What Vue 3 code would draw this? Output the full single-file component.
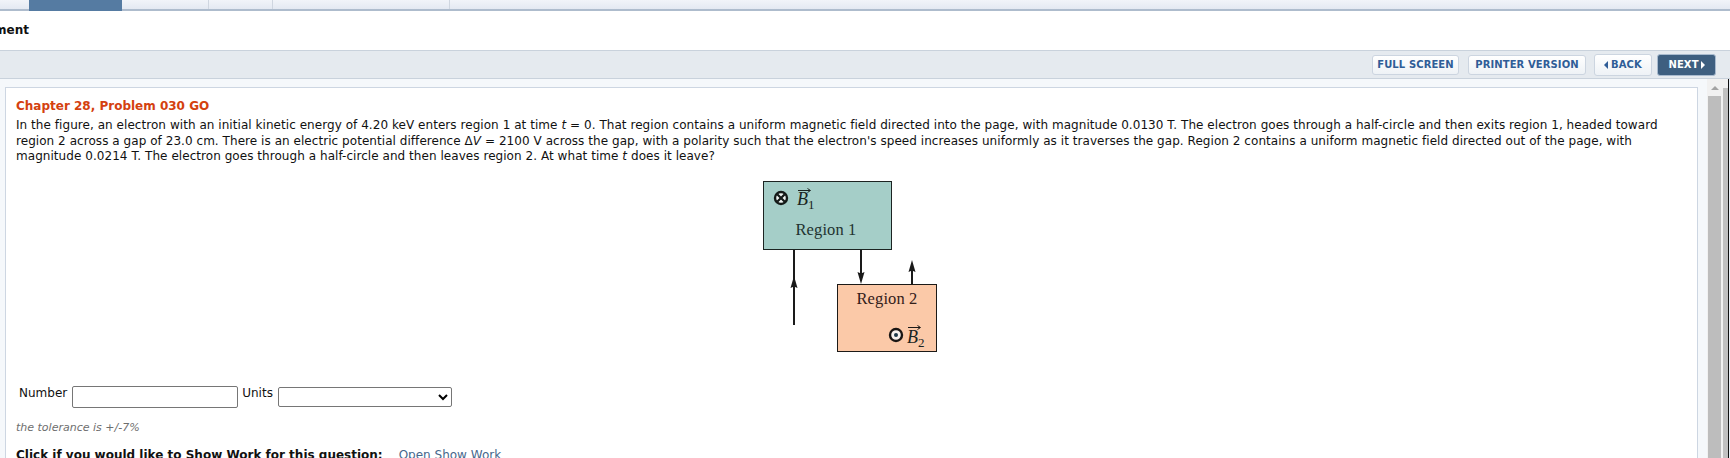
<script setup>
const tabs = [
  { width: 29 },
  { width: 93, active: true },
  { width: 87 },
  { width: 64 },
  { width: 177 },
];
</script>

<template>
  <div class="page">
    <div class="tabs">
      <div v-for="(t, i) in tabs" :key="i" class="tab" :class="{ active: t.active }" :style="{ width: t.width + 'px' }"></div>
    </div>

    <div class="subhead">ment</div>

    <div class="toolbar">
      <button class="btn">FULL SCREEN</button>
      <button class="btn printer">PRINTER VERSION</button>
      <button class="btn big back"><span class="tri left"></span>BACK</button>
      <button class="btn big next">NEXT<span class="tri right"></span></button>
    </div>

    <div class="work">
      <main class="main">
        <section class="card">
          <h2 class="title">Chapter 28, Problem 030 GO</h2>
          <p class="question">
            In the figure, an electron with an initial kinetic energy of 4.20 keV enters region 1 at time <i>t</i> = 0. That region contains a uniform magnetic field directed into the page, with magnitude 0.0130 T. The electron goes through a half-circle and then exits region 1, headed toward region 2 across a gap of 23.0 cm. There is an electric potential difference Δ<i>V</i> = 2100 V across the gap, with a polarity such that the electron's speed increases uniformly as it traverses the gap. Region 2 contains a uniform magnetic field directed out of the page, with magnitude 0.0214 T. The electron goes through a half-circle and then leaves region 2. At what time <i>t</i> does it leave?
          </p>

          <div class="figure">
            <svg width="220" height="190" viewBox="0 0 220 190">
              <rect x="22.5" y="11.5" width="128" height="68" fill="#a5cec8" stroke="#1c2422" />
              <rect x="96.5" y="114.5" width="99" height="67" fill="#fbc9a8" stroke="#1c1a18" />

              <g stroke="#1a1a1a" stroke-width="2" fill="none">
                <line x1="53" y1="80" x2="53" y2="155" />
                <line x1="120" y1="80" x2="120" y2="104" />
                <line x1="171" y1="114" x2="171" y2="100" />
              </g>
              <g fill="#1a1a1a">
                <path d="M53 106 L56.5 118 L53 116.5 L49.5 118 Z" />
                <path d="M120 114 L116.5 102 L120 103.5 L123.5 102 Z" />
                <path d="M171 90 L174.5 102 L171 100.5 L167.5 102 Z" />
              </g>

              <circle cx="40" cy="28" r="6" fill="#eef4f2" stroke="#141a18" stroke-width="2.4" />
              <path d="M36.2 24.2 L43.8 31.8 M43.8 24.2 L36.2 31.8" stroke="#141a18" stroke-width="2.2" />
              <text class="sym" x="56" y="35">B</text>
              <text class="sub" x="67" y="39">1</text>
              <path d="M57 20.5 H69 M66.5 18.5 L69.5 20.5 L66.5 22.5" stroke="#1c2422" fill="none" stroke-width="1" />
              <text class="label" x="54.5" y="65" fill="#1f3330">Region 1</text>

              <text class="label" x="115.5" y="134" fill="#33201a">Region 2</text>
              <circle cx="155" cy="165" r="6" fill="#f8f2ee" stroke="#1a1614" stroke-width="2.4" />
              <circle cx="155" cy="165" r="2" fill="#1e3a4a" />
              <text class="sym" x="166" y="173">B</text>
              <text class="sub" x="177" y="177">2</text>
              <path d="M167 157.5 H179 M176.5 155.5 L179.5 157.5 L176.5 159.5" stroke="#1c1a18" fill="none" stroke-width="1" />
            </svg>
          </div>

          <div class="answer">
            <label class="lbl">Number</label>
            <input class="num" type="text" />
            <label class="lbl">Units</label>
            <select class="units"><option></option></select>
          </div>

          <p class="tolerance">the tolerance is +/-7%</p>

          <div class="showwork">
            <b>Click if you would like to Show Work for this question:</b>
            <a class="open">Open Show Work</a>
          </div>
        </section>
      </main>

      <div class="scrollbar">
        <div class="arrow"></div>
        <div class="thumb"></div>
      </div>
      <div class="outer"><div class="outer-thumb"></div></div>
      <div class="edge"></div>
      <div class="edge-end"></div>
    </div>
  </div>
</template>

<style>
html, body { margin: 0; overflow: hidden; background: #fff; }
</style>

<style scoped>
.page {
  width: 1730px;
  height: 458px;
  overflow: hidden;
  display: flex;
  flex-direction: column;
  font-family: "DejaVu Sans", Verdana, sans-serif;
  font-size: 12px;
  color: #111;
}

.tabs {
  height: 9px;
  flex: none;
  display: flex;
  background: linear-gradient(#f1f4f9, #e4e9f2);
  border-bottom: 2px solid #aebccd;
}
.tab { height: 9px; border-right: 1px solid #cfd6e0; box-sizing: border-box; }
.tab:first-child { border-right: 0; }
.tab.active { height: 11px; background: #557ba2; border-right: 0; }

.subhead {
  height: 39px;
  flex: none;
  box-sizing: border-box;
  padding-top: 12px;
  margin-left: -6px;
  font-weight: bold;
  font-size: 12px;
  line-height: 15px;
  color: #111;
}

.toolbar {
  height: 27px;
  flex: none;
  display: flex;
  align-items: center;
  justify-content: flex-end;
  padding-right: 14px;
  background: #e5eaef;
  border-top: 1px solid #c9d2dc;
  border-bottom: 1px solid #c9d2dc;
}

.btn {
  height: 20px;
  width: 87px;
  padding: 0;
  margin-left: 9px;
  box-sizing: border-box;
  border: 1px solid #ccd5e0;
  border-radius: 3px;
  background: linear-gradient(#fff, #eef2f6);
  color: #2f5d97;
  font: bold 10px "DejaVu Sans", Verdana, sans-serif;
  letter-spacing: 0.1px;
  display: flex;
  align-items: center;
  justify-content: center;
}
.btn.printer { width: 118px; }
.btn.big { height: 22px; width: 58px; }
.btn.back { margin-left: 8px; }
.btn.next {
  width: 59px;
  margin-left: 5px;
  background: #3e5f80;
  border-color: #a9bbcf;
  color: #fff;
}
.tri { width: 0; height: 0; border-top: 4px solid transparent; border-bottom: 4px solid transparent; }
.tri.left { border-right: 4px solid #2f5d97; margin-right: 3px; }
.tri.right { border-left: 4px solid #fff; margin-left: 2px; }

.work {
  flex: 1;
  min-height: 0;
  display: flex;
  background: #f5f8fb;
}
.main {
  width: 1707px;
  flex: none;
  box-sizing: border-box;
  padding: 8px 9px 0 5px;
}
.card {
  height: 400px;
  box-sizing: border-box;
  background: #fff;
  border: 1px solid #cdd6e2;
  padding: 10px 10px 0;
  overflow: hidden;
}
.title {
  margin: 0;
  font-size: 12px;
  line-height: 16px;
  color: #d4410f;
}
.question { margin: 4px 0 0; line-height: 15.5px; letter-spacing: 0.05px; max-width: 1660px; }

.figure { display: flex; justify-content: center; margin-top: 5px; padding-right: 1px; }
.figure svg { display: block; }
.label { font: 16.5px "Liberation Serif", serif; letter-spacing: 0.1px; }
.sym { font: italic 18px "Liberation Serif", serif; fill: #1a2422; }
.sub { font: 13px "Liberation Serif", serif; fill: #1a2422; }

.answer { display: flex; align-items: flex-start; margin-top: 26px; padding-left: 3px; }
.lbl { line-height: 15px; margin-right: 5px; }
.num {
  width: 166px;
  height: 22px;
  box-sizing: border-box;
  border: 1px solid #767676;
  border-radius: 2px;
  background: #fff;
  margin-right: 4px;
}
.units {
  width: 174px;
  height: 20px;
  margin-top: 1px;
  box-sizing: border-box;
  border: 1px solid #767676;
  border-radius: 2px;
  background: #fff;
}
.tolerance { margin: 12px 0 0; font-size: 11px; font-style: italic; color: #6e6e6e; line-height: 15px; }
.showwork { margin-top: 13px; line-height: 15px; display: flex; }
.showwork b { color: #111; }
.open { margin-left: 16px; color: #46688c; }

.scrollbar {
  width: 16px;
  flex: none;
  box-sizing: border-box;
  padding: 0 2px 0 1px;
  background: #f1f1f1;
}
.arrow {
  width: 0;
  height: 0;
  margin: 7px auto 6px;
  border-left: 4px solid transparent;
  border-right: 4px solid transparent;
  border-bottom: 4px solid #a3a3a3;
}
.thumb { height: 100%; background: #bdbdbd; }
.outer { width: 5px; flex: none; background: #f1f1f1; }
.outer-thumb { height: 100%; margin-top: 9px; background: #c1c1c1; }
.edge { width: 1px; flex: none; background: #111; }
.edge-end { width: 1px; flex: none; background: #e8eef5; }
</style>
